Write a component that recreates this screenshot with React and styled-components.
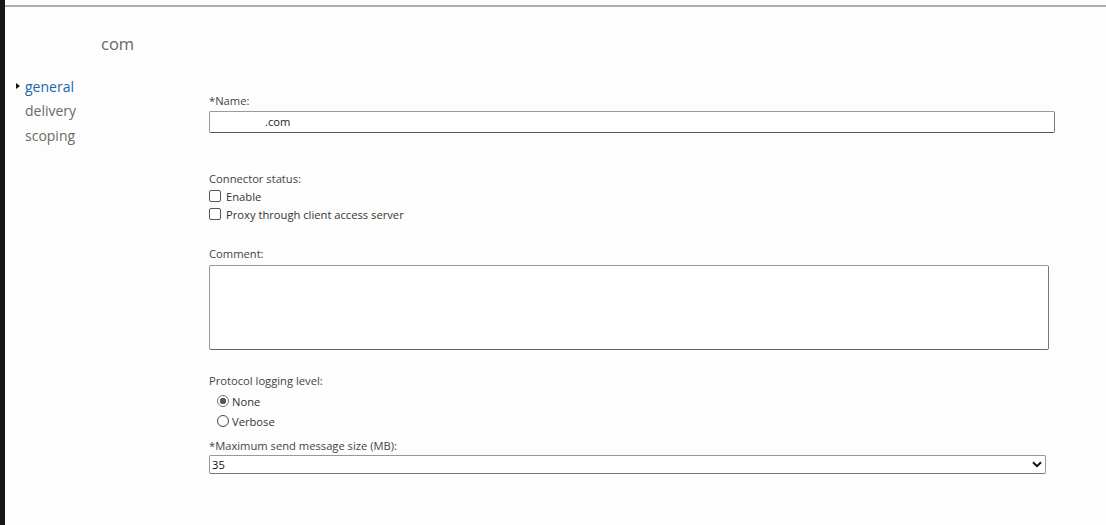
import React from "react";
import styled, { createGlobalStyle } from "styled-components";

const GlobalStyle = createGlobalStyle`
  html, body {
    margin: 0;
    padding: 0;
    background: #fdfdfd;
  }
  body {
    font-family: "Open Sans", "Noto Sans", sans-serif;
    color: #333;
  }
`;

const Page = styled.div`
  min-height: 100vh;
  box-sizing: border-box;
  border-left: 5px solid #161616;
  padding-top: 5px;
`;

const Frame = styled.div`
  border-top: 2px solid #acacac;
  min-height: 518px;
`;

const Title = styled.h1`
  margin: 0;
  padding: 26px 0 0 96px;
  font-size: 16.5px;
  line-height: 22px;
  font-weight: 400;
  color: #666;
`;

const Main = styled.div`
  display: grid;
  grid-template-columns: 204px 846px;
  margin-top: 19px;
`;

const Nav = styled.ul`
  list-style: none;
  margin: 0;
  padding: 0 0 0 11px;
`;

const NavItem = styled.li`
  display: flex;
  align-items: center;
  height: 24.5px;
  font-size: 14px;
  color: ${(p) => (p.$active ? "#1e64a8" : "#6a6a6a")};

  &::before {
    content: "";
    width: 0;
    height: 0;
    margin-right: 5px;
    border-top: 3.5px solid transparent;
    border-bottom: 3.5px solid transparent;
    border-left: 4px solid ${(p) => (p.$active ? "#111" : "transparent")};
  }
`;

const Form = styled.form`
  display: flex;
  flex-direction: column;
  padding-top: 20px;
`;

const Label = styled.div`
  font-size: 11.2px;
  line-height: 14px;
  color: #444;
  margin-top: ${(p) => p.$gap || 0}px;
`;

const TextInput = styled.input`
  box-sizing: border-box;
  width: 846px;
  height: 22px;
  margin-top: 3px;
  padding: 0 0 2px 55px;
  border: 1px solid #9a9a9a;
  border-bottom-color: #555;
  border-right-color: #777;
  border-radius: 2px;
  background: #fff;
  font-family: inherit;
  font-size: 11.2px;
  color: #222;
  outline: none;
`;

const OptionRow = styled.label`
  display: flex;
  align-items: center;
  height: ${(p) => p.$h || 18}px;
  margin-top: ${(p) => p.$gap || 0}px;
  padding-left: ${(p) => p.$indent || 0}px;
  font-size: 11.2px;
  color: #333;
  gap: ${(p) => p.$space || 5}px;
`;

const Check = styled.input.attrs({ type: "checkbox" })`
  appearance: none;
  box-sizing: border-box;
  width: 12px;
  height: 12px;
  margin: 0;
  border: 1px solid #555;
  border-radius: 2px;
  background: #fff;
`;

const Radio = styled.input.attrs({ type: "radio" })`
  appearance: none;
  box-sizing: border-box;
  width: 12px;
  height: 12px;
  margin: 0;
  border: 1px solid ${(p) => (p.checked ? "#777" : "#444")};
  border-radius: 50%;
  background: ${(p) =>
    p.checked ? "radial-gradient(circle, #5a5a5a 0 3px, #fff 3.5px)" : "#fff"};
`;

const TextArea = styled.textarea`
  box-sizing: border-box;
  width: 840px;
  height: 85px;
  margin-top: 4px;
  border: 1px solid #999;
  border-bottom-color: #666;
  border-right-color: #777;
  border-radius: 2px;
  background: #fff;
  resize: none;
  outline: none;
`;

const SelectWrap = styled.div`
  position: relative;
  width: 837px;
  height: 19px;
  margin-top: 2px;
`;

const Select = styled.select`
  appearance: none;
  box-sizing: border-box;
  display: block;
  width: 100%;
  height: 19px;
  padding: 0 0 0 2px;
  border: 1px solid #999;
  border-bottom-color: #777;
  border-radius: 2px;
  background: #fff;
  font-family: inherit;
  font-size: 11.2px;
  color: #111;
  outline: none;
`;

const Chevron = styled.svg`
  position: absolute;
  right: 4px;
  top: 6px;
  pointer-events: none;
`;

export default function App() {
  return (
    <>
      <GlobalStyle />
      <Page>
        <Frame>
          <Title>com</Title>
          <Main>
            <Nav>
              <NavItem $active>general</NavItem>
              <NavItem>delivery</NavItem>
              <NavItem>scoping</NavItem>
            </Nav>
            <Form>
              <Label>*Name:</Label>
              <TextInput defaultValue=".com" />

              <Label $gap={39}>Connector status:</Label>
              <OptionRow $gap={1}>
                <Check />
                Enable
              </OptionRow>
              <OptionRow>
                <Check />
                Proxy through client access server
              </OptionRow>

              <Label $gap={24}>Comment:</Label>
              <TextArea />

              <Label $gap={24}>Protocol logging level:</Label>
              <OptionRow $h={20} $indent={8} $space={3} $gap={3}>
                <Radio name="log" checked readOnly />
                None
              </OptionRow>
              <OptionRow $h={20} $indent={8} $space={3}>
                <Radio name="log" checked={false} readOnly />
                Verbose
              </OptionRow>

              <Label $gap={8}>*Maximum send message size (MB):</Label>
              <SelectWrap>
                <Select defaultValue="35">
                  <option value="35">35</option>
                </Select>
                <Chevron width="10" height="7" viewBox="0 0 10 7">
                  <path d="M1 1.2 L5 5.2 L9 1.2" fill="none" stroke="#111" strokeWidth="2" />
                </Chevron>
              </SelectWrap>
            </Form>
          </Main>
        </Frame>
      </Page>
    </>
  );
}
